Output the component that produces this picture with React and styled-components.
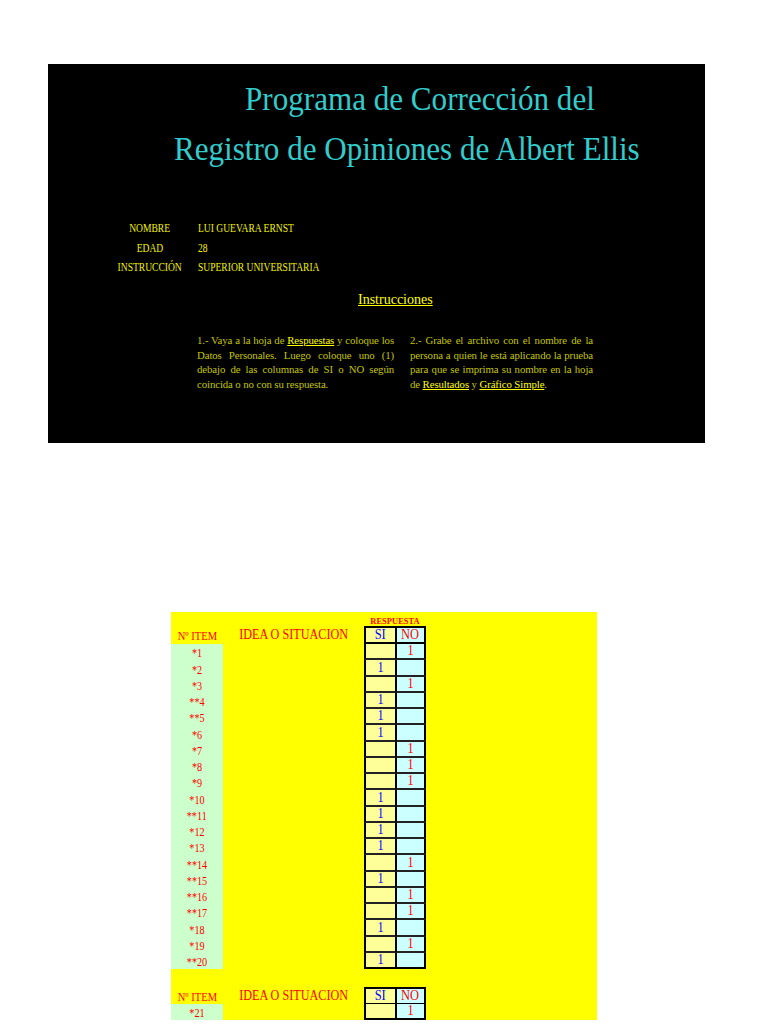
import React from "react";
import styled, { createGlobalStyle } from "styled-components";

const Global = createGlobalStyle`
  html, body { margin: 0; padding: 0; background: #ffffff; }
  body { font-family: "Liberation Serif", "Times New Roman", serif; }
  * { box-sizing: border-box; }
`;

const Page = styled.div`
  width: 768px;
  height: 1024px;
  padding-top: 64px;
  overflow: hidden;
`;

/* narrow face: the original sheet uses a condensed serif */
const Narrow = styled.span`
  display: inline-block;
  transform: scaleX(${(p) => p.$x});
  transform-origin: ${(p) => p.$origin || "center"} bottom;
  white-space: nowrap;
`;

const Panel = styled.section`
  margin-left: 48px;
  width: 657px;
  height: 379px;
  background: #000000;
  padding-top: 10px;
  font-family: "Liberation Serif", "Times New Roman", serif;
`;

const TitleLine = styled.h1`
  margin: 0;
  padding-left: ${(p) => p.$indent}px;
  font-weight: normal;
  font-size: 34px;
  line-height: 50px;
  color: #33cccc;
  white-space: nowrap;
`;

const Info = styled.dl`
  display: grid;
  grid-template-columns: 80px 1fr;
  column-gap: 8px;
  margin: 45px 0 0;
  padding-left: 62px;
  font-size: 11.5px;
  line-height: 19.5px;
  color: #f2f200;
`;

const Label = styled.dt`
  text-align: center;
  white-space: nowrap;
`;

const Value = styled.dd`
  margin: 0;
  white-space: nowrap;
`;

const Heading = styled.h2`
  margin: 12.5px 0 0;
  padding-left: 310px;
  font-weight: normal;
  font-size: 14px;
  line-height: 20px;
  color: #ffff00;
  text-decoration: underline;
`;

const Instructions = styled.div`
  display: grid;
  grid-template-columns: 197px 183px;
  column-gap: 16px;
  margin-top: 23px;
  padding-left: 149px;
`;

const Para = styled.p`
  margin: 0;
  font-size: 10.8px;
  letter-spacing: -0.1px;
  line-height: 14.7px;
  color: #c4c400;
`;

const Line = styled.span`
  display: block;
  white-space: nowrap;
  text-align: ${(p) => (p.$last ? "left" : "justify")};
  text-align-last: ${(p) => (p.$last ? "left" : "justify")};
`;

const Link = styled.span`
  color: #ffff00;
  text-decoration: underline;
`;

const Sheet = styled.section`
  margin: 169px 0 0 171px;
  width: 426px;
  height: 408px;
  background: #ffff00;
  font-family: "Liberation Serif", "Times New Roman", serif;
`;

const Row = styled.div`
  display: grid;
  grid-template-columns: 52px 141px 31px 31px;
  height: ${(p) => p.$h}px;
`;

const Cell = styled.div`
  display: flex;
  align-items: flex-end;
  justify-content: center;
  line-height: 1;
  white-space: nowrap;
  padding-bottom: ${(p) => p.$pb ?? 1}px;
`;

const Caption = styled(Cell)`
  grid-column: 3 / span 2;
  font-size: 8.5px;
  font-weight: bold;
  color: #ff0000;
  padding-bottom: 1px;
`;

const ItemCell = styled(Cell)`
  background: ${(p) => (p.$head ? "transparent" : "#ccffcc")};
  color: #ff0000;
  font-size: 12px;
`;

const IdeaCell = styled(Cell)`
  color: #ff0000;
  font-size: 14px;
`;

const AnswerCell = styled(Cell)`
  background: ${(p) => (p.$kind === "si" ? "#ffff99" : "#ccffff")};
  color: ${(p) => (p.$kind === "si" ? "#0000ff" : "#ff0000")};
  font-size: 14px;
  border-left: 2px solid #000;
  border-right: ${(p) => (p.$kind === "no" ? "2px solid #000" : "none")};
  border-top: ${(p) => (p.$head ? "2px solid #000" : "none")};
  border-bottom: 2px solid ${(p) => (p.$head || p.$lastRow ? "#000" : "#222")};
`;

const items = [
  ["*1", "no"], ["*2", "si"], ["*3", "no"], ["**4", "si"], ["**5", "si"],
  ["*6", "si"], ["*7", "no"], ["*8", "no"], ["*9", "no"], ["*10", "si"],
  ["**11", "si"], ["*12", "si"], ["*13", "si"], ["**14", "no"], ["**15", "si"],
  ["**16", "no"], ["**17", "no"], ["*18", "si"], ["*19", "no"], ["**20", "si"],
];

const HeaderRow = ({ h }) => (
  <Row $h={h}>
    <ItemCell $head $pb={2}><Narrow $x={0.88}>Nº ITEM</Narrow></ItemCell>
    <IdeaCell $pb={2}><Narrow $x={0.87}>IDEA O SITUACION</Narrow></IdeaCell>
    <AnswerCell $kind="si" $head $pb={0}><Narrow $x={0.89}>SI</Narrow></AnswerCell>
    <AnswerCell $kind="no" $head $pb={0}><Narrow $x={0.89}>NO</Narrow></AnswerCell>
  </Row>
);

const ItemRow = ({ label, answer, h, lastRow }) => (
  <Row $h={h}>
    <ItemCell><Narrow $x={0.85}>{label}</Narrow></ItemCell>
    <IdeaCell />
    <AnswerCell $kind="si" $lastRow={lastRow} $pb={0}>
      {answer === "si" ? <Narrow $x={0.88}>1</Narrow> : null}
    </AnswerCell>
    <AnswerCell $kind="no" $lastRow={lastRow} $pb={0}>
      {answer === "no" ? <Narrow $x={0.88}>1</Narrow> : null}
    </AnswerCell>
  </Row>
);

export default function App() {
  return (
    <Page>
      <Global />
      <Panel>
        <TitleLine $indent={197}>
          <Narrow $x={0.915} $origin="left">Programa de Corrección del</Narrow>
        </TitleLine>
        <TitleLine $indent={126}>
          <Narrow $x={0.915} $origin="left">Registro de Opiniones de Albert Ellis</Narrow>
        </TitleLine>
        <Info>
          <Label><Narrow $x={0.83}>NOMBRE</Narrow></Label>
          <Value><Narrow $x={0.83} $origin="left">LUI GUEVARA ERNST</Narrow></Value>
          <Label><Narrow $x={0.83}>EDAD</Narrow></Label>
          <Value><Narrow $x={0.83} $origin="left">28</Narrow></Value>
          <Label><Narrow $x={0.83}>INSTRUCCIÓN</Narrow></Label>
          <Value><Narrow $x={0.83} $origin="left">SUPERIOR UNIVERSITARIA</Narrow></Value>
        </Info>
        <Heading>Instrucciones</Heading>
        <Instructions>
          <Para>
            <Line>1.- Vaya a la hoja de <Link>Respuestas</Link> y coloque los</Line>
            <Line>Datos Personales. Luego coloque uno (1)</Line>
            <Line>debajo de las columnas de SI o NO según</Line>
            <Line $last>coincida o no con su respuesta.</Line>
          </Para>
          <Para>
            <Line>2.- Grabe el archivo con el nombre de la</Line>
            <Line>persona a quien le está aplicando la prueba</Line>
            <Line>para que se imprima su nombre en la hoja</Line>
            <Line $last>
              de <Link>Resultados</Link> y <Link>Gráfico Simple</Link>.
            </Line>
          </Para>
        </Instructions>
      </Panel>
      <Sheet>
        <Row $h={14}>
          <Caption>RESPUESTA</Caption>
        </Row>
        <HeaderRow h={18} />
        {items.map(([label, answer], i) => (
          <ItemRow key={label} label={label} answer={answer} h={16.25} lastRow={i === items.length - 1} />
        ))}
        <Row $h={18} />
        <HeaderRow h={17} />
        <ItemRow label="*21" answer="no" h={16} lastRow />
      </Sheet>
    </Page>
  );
}
